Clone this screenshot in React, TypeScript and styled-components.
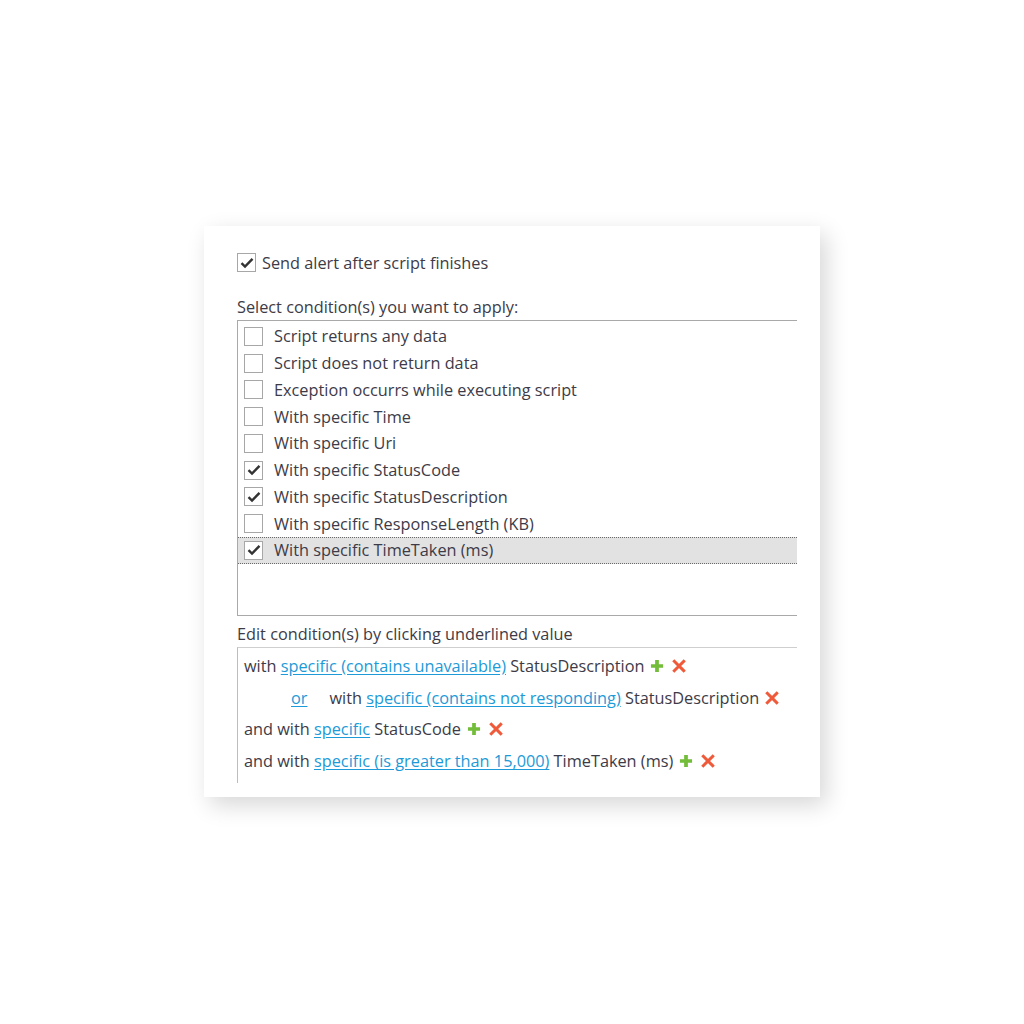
import React from "react";
import styled, { createGlobalStyle } from "styled-components";

const GlobalStyle = createGlobalStyle`
  html, body {
    margin: 0;
    padding: 0;
    background: #ffffff;
  }
  body {
    font-family: "Open Sans", "DejaVu Sans", sans-serif;
    color: #3d3b47;
  }
`;

const Page = styled.div`
  width: 1024px;
  height: 1024px;
  padding: 226px 0 0 204px;
  box-sizing: border-box;
`;

const Card = styled.div`
  width: 616px;
  height: 571px;
  box-sizing: border-box;
  background: #ffffff;
  box-shadow: 6px 8px 22px rgba(0, 0, 0, 0.16);
  padding: 26px 23px 14px 33px;
  display: flex;
  flex-direction: column;
  font-size: 16.3px;
  overflow: hidden;
`;

const AlertRow = styled.label`
  display: flex;
  align-items: center;
  gap: 6px;
  height: 21px;
`;

const Caption = styled.div<{ $top: number }>`
  margin-top: ${(p) => p.$top}px;
  height: 20px;
  line-height: 20px;
`;

const ListBox = styled.div`
  margin-top: 3px;
  height: 296px;
  box-sizing: border-box;
  border: 1px solid #a9a9a9;
  border-right: none;
  padding-top: 2px;
`;

const ListRow = styled.div<{ $selected?: boolean }>`
  display: flex;
  align-items: center;
  gap: 11px;
  height: 26.75px;
  box-sizing: border-box;
  padding-left: 6px;
  background: ${(p) => (p.$selected ? "#e2e2e2" : "transparent")};
  border-top: 1px dotted ${(p) => (p.$selected ? "#6a6a6a" : "transparent")};
  border-bottom: 1px dotted ${(p) => (p.$selected ? "#6a6a6a" : "transparent")};
`;

const Box = styled.span<{ $size: number }>`
  width: ${(p) => p.$size}px;
  height: ${(p) => p.$size}px;
  box-sizing: border-box;
  border: 1px solid #a7a7a7;
  background: #ffffff;
  display: inline-flex;
  align-items: center;
  justify-content: center;
  flex-shrink: 0;
`;

const EditBox = styled.div`
  margin-top: 3px;
  flex: 1;
  border-top: 1px solid #cfcfcf;
  border-left: 1px solid #bdbdbd;
  padding: 2px 0 0 6px;
`;

const EditRow = styled.div<{ $indent?: number }>`
  display: flex;
  align-items: center;
  height: 31.8px;
  padding-left: ${(p) => p.$indent ?? 0}px;
  white-space: pre;
`;

const Link = styled.span<{ $gap?: number }>`
  color: #1d9ad8;
  text-decoration: underline;
  text-underline-offset: 2px;
  margin-right: ${(p) => p.$gap ?? 0}px;
`;

const Icon = styled.svg<{ $gap: number }>`
  margin-left: ${(p) => p.$gap}px;
  flex-shrink: 0;
`;

const Check = () => (
  <svg width="14" height="12" viewBox="0 0 14 12">
    <path d="M1.5 6.2 L5 9.6 L12.5 1.8" fill="none" stroke="#333" strokeWidth="2.4" />
  </svg>
);

const Plus = () => (
  <Icon $gap={6} width="14" height="14" viewBox="0 0 15 15">
    <path d="M5.5 1 H9.5 V5.5 H14 V9.5 H9.5 V14 H5.5 V9.5 H1 V5.5 H5.5 Z" fill="#73bd3a" />
  </Icon>
);

const Cross = ({ gap = 8 }: { gap?: number }) => (
  <Icon $gap={gap} width="14" height="14" viewBox="0 0 15 15">
    <path d="M2.5 2.5 L12.5 12.5 M12.5 2.5 L2.5 12.5" stroke="#ee5a3a" strokeWidth="3.2" strokeLinecap="square" />
  </Icon>
);

const conditions = [
  { text: "Script returns any data", checked: false },
  { text: "Script does not return data", checked: false },
  { text: "Exception occurrs while executing script", checked: false },
  { text: "With specific Time", checked: false },
  { text: "With specific Uri", checked: false },
  { text: "With specific StatusCode", checked: true },
  { text: "With specific StatusDescription", checked: true },
  { text: "With specific ResponseLength (KB)", checked: false },
  { text: "With specific TimeTaken (ms)", checked: true, selected: true },
];

const App: React.FC = () => {
  return (
    <>
      <GlobalStyle />
      <Page>
        <Card>
          <AlertRow>
            <Box $size={19}>
              <Check />
            </Box>
            Send alert after script finishes
          </AlertRow>
          <Caption $top={24}>Select condition(s) you want to apply:</Caption>
          <ListBox>
            {conditions.map((c) => (
              <ListRow key={c.text} $selected={c.selected}>
                <Box $size={19}>{c.checked && <Check />}</Box>
                {c.text}
              </ListRow>
            ))}
          </ListBox>
          <Caption $top={8}>Edit condition(s) by clicking underlined value</Caption>
          <EditBox>
            <EditRow>
              with <Link>specific (contains unavailable)</Link> StatusDescription
              <Plus />
              <Cross />
            </EditRow>
            <EditRow $indent={47}>
              <Link $gap={22}>or</Link>with <Link>specific (contains not responding)</Link> StatusDescription
              <Cross gap={6} />
            </EditRow>
            <EditRow>
              and with <Link>specific</Link> StatusCode
              <Plus />
              <Cross />
            </EditRow>
            <EditRow>
              and with <Link>specific (is greater than 15,000)</Link> TimeTaken (ms)
              <Plus />
              <Cross />
            </EditRow>
          </EditBox>
        </Card>
      </Page>
    </>
  );
};

export default App;
